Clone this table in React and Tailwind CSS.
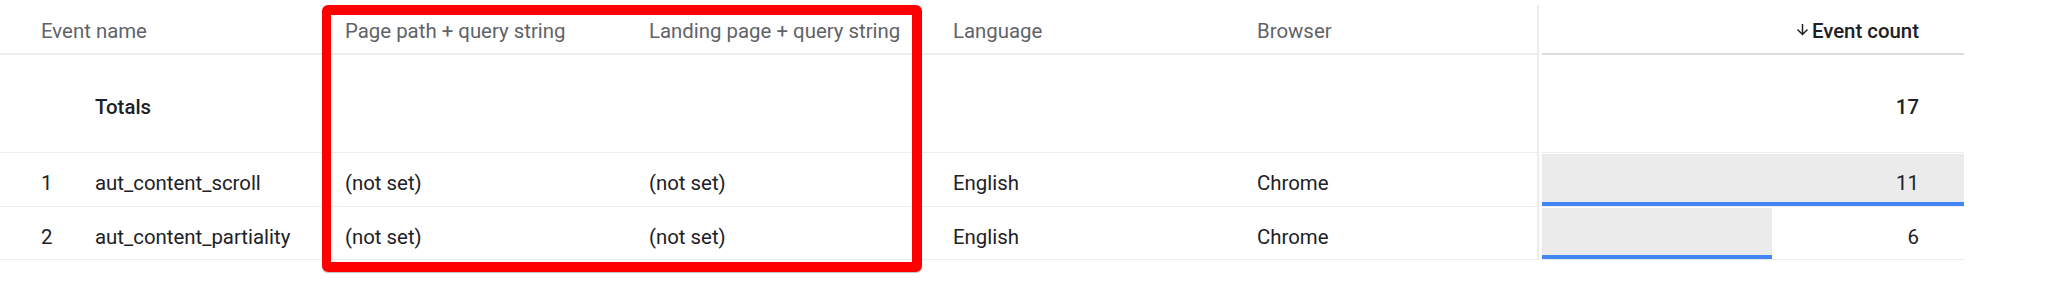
import React from "react";

const rows = [
  { rank: 1, name: "aut_content_scroll", page: "(not set)", landing: "(not set)", lang: "English", browser: "Chrome", count: 11 },
  { rank: 2, name: "aut_content_partiality", page: "(not set)", landing: "(not set)", lang: "English", browser: "Chrome", count: 6 },
];
const maxCount = 11;

function ArrowDown() {
  return (
    <svg width="13" height="13" viewBox="0 0 13 13" className="mr-[3px] mb-[4px]">
      <path d="M6.5 1v10.5M1.5 6.5l5 5 5-5" fill="none" stroke="#202124" strokeWidth="1.5" />
    </svg>
  );
}

export default function App() {
  return (
    <div className="relative h-[290px] w-[2048px] overflow-hidden bg-white font-['Roboto',sans-serif] text-[20.4px] text-[#202124]">
      <div className="flex">
        {/* dimension columns */}
        <div className="w-[1537px]">
          <div className="flex h-[55px] items-center border-b-2 border-[#eeeeee] pt-[9px] text-[#5f6368]">
            <div className="w-[345px] pl-[41px]">Event name</div>
            <div className="w-[304px]">Page path + query string</div>
            <div className="w-[304px]">Landing page + query string</div>
            <div className="w-[304px]">Language</div>
            <div className="w-[280px]">Browser</div>
          </div>
          <div className="flex h-[98px] items-center border-b border-[#ececec] pt-[8px]">
            <div className="w-[95px]" />
            <div className="font-medium">Totals</div>
          </div>
          {rows.map((r, i) => (
            <div
              key={r.rank}
              className={`flex items-center border-b border-[#ececec] pt-[8px] ${i === 0 ? "h-[54px]" : "h-[53px]"}`}
            >
              <div className="w-[95px] pl-[41px]">{r.rank}</div>
              <div className="w-[250px]">{r.name}</div>
              <div className="w-[304px]">{r.page}</div>
              <div className="w-[304px]">{r.landing}</div>
              <div className="w-[304px]">{r.lang}</div>
              <div className="w-[280px]">{r.browser}</div>
            </div>
          ))}
        </div>

        <div className="mt-[5px] h-[255px] w-[2px] bg-[#ececec]" />

        {/* metric column */}
        <div className="ml-[3px] w-[422px]">
          <div className="flex h-[55px] items-center justify-end border-b-2 border-[#dadce0] pr-[45px] pt-[9px]">
            <ArrowDown />
            <span className="font-medium">Event count</span>
          </div>
          <div className="flex h-[98px] items-center justify-end border-b border-[#ececec] pr-[45px] pt-[8px] font-medium">
            17
          </div>
          {rows.map((r, i) => (
            <div
              key={r.rank}
              className={`relative flex items-center justify-end border-b border-[#ececec] pr-[45px] pt-[8px] ${i === 0 ? "h-[54px]" : "h-[53px]"}`}
            >
              <div
                className="absolute left-0 top-[1px] bottom-0 border-b-4 border-[#4285f4] bg-[#ebebeb]"
                style={{ width: `${(r.count / maxCount) * 100}%` }}
              />
              <span className="relative">{r.count}</span>
            </div>
          ))}
        </div>
      </div>

      {/* highlight box */}
      <div className="absolute left-[322px] top-[5px] h-[267px] w-[600px] rounded-[6px] border-[10px] border-l-[9px] border-[#ff0000] shadow-[0_1px_1px_rgba(0,0,0,0.25)]" />
    </div>
  );
}
